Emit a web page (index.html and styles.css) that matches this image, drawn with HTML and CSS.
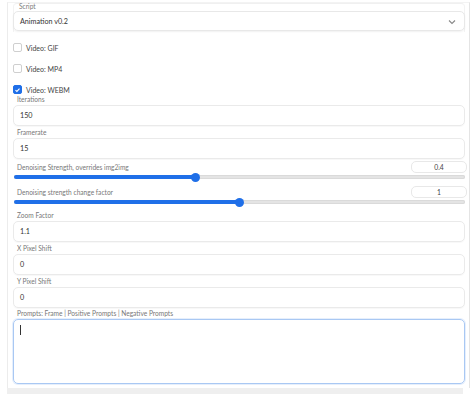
FILE: index.html
```html
<!DOCTYPE html>
<html>
<head>
<meta charset="utf-8">
<link rel="stylesheet" href="styles.css">
</head>
<body>
<div class="panel">
  <div class="script-block">
    <div class="script-label">Script</div>
    <div class="dropdown">
      <span>Animation v0.2</span>
      <svg class="chev" width="8" height="6" viewBox="0 0 8 6"><path d="M1 1.5 L4 4.5 L7 1.5" fill="none" stroke="#888" stroke-width="1.1"/></svg>
    </div>
  </div>

  <div class="checks">
    <div class="check"><span class="box"></span><span>Video: GIF</span></div>
    <div class="check"><span class="box"></span><span>Video: MP4</span></div>
    <div class="check checked"><span class="box"><svg width="8" height="8" viewBox="0 0 8 8"><path d="M1.7 4.1 L3.3 5.6 L6.3 2.4" fill="none" stroke="#fff" stroke-width="1.3"/></svg></span><span>Video: WEBM</span></div>
  </div>

  <div class="field first">
    <div class="label">Iterations</div>
    <div class="input">150</div>
  </div>
  <div class="field">
    <div class="label">Framerate</div>
    <div class="input">15</div>
  </div>

  <div class="slider">
    <div class="slider-head">
      <div class="label">Denoising Strength, overrides img2img</div>
      <div class="num">0.4</div>
    </div>
    <div class="track"><div class="fill" style="width:40.3%"></div><div class="thumb" style="left:40.3%"></div></div>
  </div>
  <div class="slider">
    <div class="slider-head">
      <div class="label">Denoising strength change factor</div>
      <div class="num">1</div>
    </div>
    <div class="track"><div class="fill" style="width:50%"></div><div class="thumb" style="left:50%"></div></div>
  </div>

  <div class="field">
    <div class="label">Zoom Factor</div>
    <div class="input">1.1</div>
  </div>
  <div class="field">
    <div class="label">X Pixel Shift</div>
    <div class="input">0</div>
  </div>
  <div class="field">
    <div class="label">Y Pixel Shift</div>
    <div class="input">0</div>
  </div>
  <div class="field prompts">
    <div class="label">Prompts: Frame | Positive Prompts | Negative Prompts</div>
    <div class="textarea"><span class="caret"></span></div>
  </div>
</div>
<div class="bottom-bar"></div>
</body>
</html>
```

FILE: styles.css
```css
* { box-sizing: border-box; }
html, body { margin: 0; padding: 0; background: #fff; }
body {
  font-family: "Lato", "Noto Sans", sans-serif;
  color: #374151;
  width: 474px;
  height: 394px;
  overflow: hidden;
}
.panel {
  margin: 2px 4px 0 7px;
  border-left: 1px solid #ececec;
  border-right: 1px solid #e4e4e4;
  border-top: 1px solid #f3f3f3;
  padding: 0 4px 0 5px;
  height: 386px;
}
.script-block {
  border-top: 1px solid #f0f0f0;
  border-left: 1px solid #f3f3f3;
  border-right: 1px solid #f3f3f3;
  border-radius: 4px 4px 0 0;
  height: 29px;
}
.script-label {
  font-size: 6.6px;
  color: #7a7a7a;
  line-height: 5px;
  height: 5px;
  padding-left: 5px;
}
.dropdown {
  height: 20px;
  margin: 2px -1px 0 -1px;
  border: 1px solid #e8e8e8;
  border-radius: 5px;
  box-shadow: 0 1px 2px rgba(0,0,0,0.06);
  display: flex;
  align-items: center;
  justify-content: space-between;
  padding: 0 8px 0 6px;
  font-size: 7.2px;
  color: #333;
}
.chev { margin-top: 1px; }
.checks {
  display: flex;
  flex-direction: column;
  gap: 10px;
  margin-top: 10px;
}
.check {
  display: flex;
  align-items: center;
  gap: 4px;
  font-size: 7px;
  color: #444;
  height: 11px;
}
.box {
  width: 9px;
  height: 9px;
  border: 1px solid #cfcfcf;
  border-radius: 2px;
  background: #fff;
  display: flex;
  align-items: center;
  justify-content: center;
}
.checked .box {
  background: #1f6fe8;
  border-color: #1f6fe8;
}
.checked .box svg { display: block; }
.field { display: flex; flex-direction: column; }
.field.first { margin-top: -1px; }
.label {
  font-size: 6.6px;
  color: #777;
  line-height: 11px;
  height: 11px;
  padding-left: 4px;
  white-space: nowrap;
}
.input {
  height: 21px;
  border: 1px solid #eaeaea;
  border-radius: 5px;
  box-shadow: 0 1px 1px rgba(0,0,0,0.03);
  display: flex;
  align-items: center;
  padding-left: 6px;
  font-size: 7.2px;
  color: #333;
  margin-bottom: 1px;
}
.slider { display: flex; flex-direction: column; }
.slider-head {
  display: flex;
  justify-content: space-between;
  align-items: center;
  height: 12px;
  margin-top: 1px;
}
.num {
  width: 56px;
  height: 12px;
  border: 1px solid #e8e8e8;
  border-radius: 5px;
  font-size: 6.8px;
  color: #444;
  text-align: center;
  line-height: 10px;
  margin-right: -2px;
}
.track {
  position: relative;
  height: 4px;
  margin: 2px 0 6px 1px;
  background: #e4e4e4;
  border-radius: 2px;
  box-shadow: inset 0 0 0 1px #dadada;
}
.fill {
  height: 4px;
  background: #1f6fe8;
  border-radius: 2px;
}
.thumb {
  position: absolute;
  top: -2.5px;
  width: 9px;
  height: 9px;
  margin-left: -4.5px;
  border-radius: 50%;
  background: #1f6fe8;
}
.prompts { margin-top: -1px; }
.textarea {
  height: 65px;
  border: 1px solid #a9c8f3;
  border-radius: 5px;
  box-shadow: 0 0 0 1px #e6effc;
  padding: 5px 0 0 6px;
}
.caret {
  display: block;
  width: 1px;
  height: 10px;
  background: #333;
}
.bottom-bar {
  margin: 0 11px 0 7px;
  height: 6px;
  background: #efefef;
}
```
